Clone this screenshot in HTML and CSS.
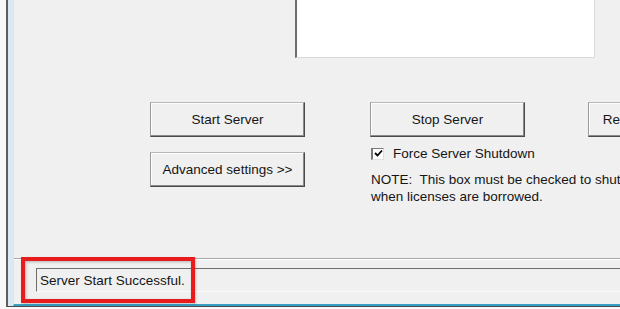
FILE: index.html
```html
<!DOCTYPE html>
<html lang="en">
<head>
    <meta charset="UTF-8">
    <title>License Server Control</title>
    <link rel="stylesheet" href="styles.css">
</head>
<body>
    <div class="window">
        <div class="frame">
            <div class="client">
                <div class="log-box"></div>

                <div class="controls">
                    <button class="btn">Start Server</button>
                    <button class="btn">Stop Server</button>
                    <button class="btn">ReRead License File</button>

                    <button class="btn btn-advanced">Advanced settings &gt;&gt;</button>
                    <div class="options">
                        <label class="check">
                            <span class="check-box">
                                <svg width="9" height="9" viewBox="0 0 9 9"><path d="M1 4 L3.5 6.5 L8 1.5" fill="none" stroke="#000" stroke-width="1.8"/></svg>
                            </span>
                            Force Server Shutdown
                        </label>
                        <p class="note">NOTE:&nbsp; This box must be checked to shut down a license server<br>when licenses are borrowed.</p>
                    </div>
                </div>

                <div class="footer">
                    <div class="status-bar">
                        <div class="status-text">Server Start Successful.</div>
                    </div>
                </div>
            </div>
        </div>
    </div>

    <!-- annotation highlight -->
    <div class="highlight"></div>
</body>
</html>
```

FILE: styles.css
```css
body {
    margin: 0;
    width: 620px;
    height: 309px;
    overflow: hidden;
    background: #f9f9f9;
    font-family: 'Liberation Sans', Arial, sans-serif;
    font-size: 13.5px;
    color: #151515;
    position: relative;
}

.window {
    margin-left: 6px;
    height: 306px;
    border-left: 2px solid #5e5e5e;
    border-bottom: 1px solid #4a4a4a;
}

.frame {
    height: 100%;
    border-left: 5px solid #dce8f3;
}

.client {
    height: 304px;
    display: flex;
    flex-direction: column;
    background: #f0f0f0;
    border-left: 1px solid #e2e2e2;
    border-bottom: 2px solid #3a9fc4;
}

.log-box {
    margin-left: 281px;
    width: 297px;
    height: 57px;
    background: #fff;
    border-left: 2px solid #6d6d6d;
    border-right: 1px solid #dadada;
    border-bottom: 1px solid #dadada;
}

.controls {
    display: grid;
    grid-template-columns: 220px 218px 155px;
    margin: 44px 0 0 136px;
    align-items: start;
}

.btn {
    width: 155px;
    height: 35px;
    padding: 0;
    font-family: inherit;
    font-size: 13.5px;
    color: #151515;
    background: #f0f0f0;
    border: 1px solid;
    border-color: #b8b8b8 #4a4a4a #4a4a4a #9a9a9a;
    box-shadow: inset -1px -1px 0 #8a8a8a, inset 1px 1px 0 #fdfdfd;
    white-space: nowrap;
}

.btn-advanced {
    margin-top: 15px;
}

.options {
    grid-column: span 2;
    margin: 9px 0 0 1px;
}

.check {
    display: flex;
    align-items: center;
    gap: 9px;
    height: 15px;
    line-height: 15px;
}

.check-box {
    width: 10px;
    height: 10px;
    display: flex;
    align-items: center;
    justify-content: center;
    background: #fff;
    border: 1px solid #7a7a7a;
    border-left-width: 2px;
    border-right-color: #e0e0e0;
    border-bottom-color: #e0e0e0;
}

.note {
    margin: 10px 0 0 0;
    line-height: 17px;
    white-space: nowrap;
}

.footer {
    margin-top: auto;
    margin-bottom: 12px;
    border-top: 1px solid #a8a8a8;
    box-shadow: inset 0 1px 0 #fff;
    padding-top: 9px;
}

.status-bar {
    margin-left: 22px;
    height: 22px;
    border-top: 1px solid #6e6e6e;
    border-left: 1px solid #6e6e6e;
    border-bottom: 1px solid #fbfbfb;
    display: flex;
    align-items: center;
}

.status-text {
    padding-left: 3px;
}

.highlight {
    position: absolute;
    left: 21px;
    top: 257px;
    width: 166px;
    height: 38px;
    border: 4px solid #e81c1c;
    box-shadow: inset 1px 1px 3px rgba(0,0,0,0.25), 1px 1px 2px rgba(0,0,0,0.2);
}
```
